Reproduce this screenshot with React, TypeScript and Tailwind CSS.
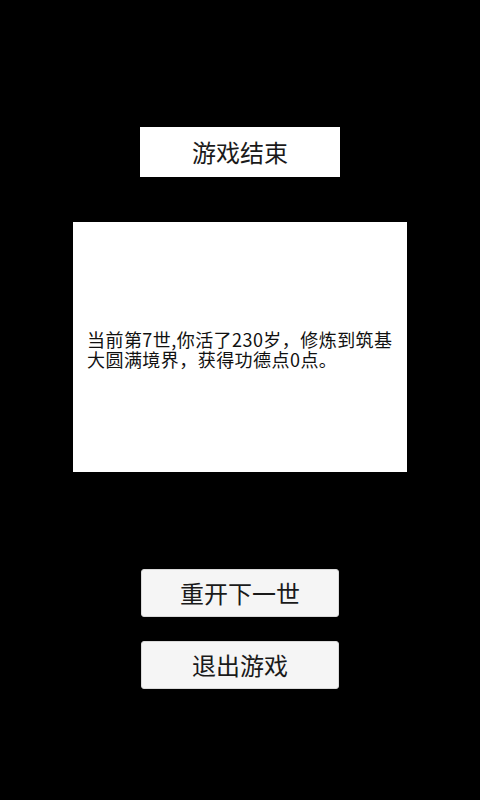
export default function App() {
  const font = { fontFamily: '"Noto Sans CJK SC", "Noto Sans", sans-serif' };
  return (
    <div className="w-[480px] h-[800px] bg-black flex flex-col items-center pt-[127px]" style={font}>
      <div className="w-[200px] h-[50px] bg-white flex items-center justify-center text-[24px] leading-none text-[#1a1a1a]">
        游戏结束
      </div>
      <div className="mt-[45px] w-[334px] h-[250px] bg-white flex items-center pl-[14px] pr-[10px] text-[18px] leading-[20px] tracking-[0.45px] text-[#111]">
        <p className="mt-[4px]">当前第7世,你活了230岁，修炼到筑基大圆满境界，获得功德点0点。</p>
      </div>
      <div className="mt-[97px] w-[198px] h-[48px] bg-[#f5f5f5] rounded-[3px] border border-[#d9d9d9] flex items-center justify-center text-[24px] leading-none text-[#1a1a1a]">
        重开下一世
      </div>
      <div className="mt-[24px] w-[198px] h-[48px] bg-[#f5f5f5] rounded-[3px] border border-[#d9d9d9] flex items-center justify-center text-[24px] leading-none text-[#1a1a1a]">
        退出游戏
      </div>
    </div>
  );
}
